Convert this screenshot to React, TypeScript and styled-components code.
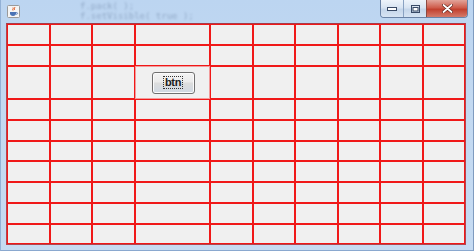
import React from "react";
import styled, { createGlobalStyle } from "styled-components";

const GlobalStyle = createGlobalStyle`
  html, body {
    margin: 0;
    padding: 0;
    width: 474px;
    height: 251px;
    overflow: hidden;
    background: #ffffff;
  }
`;

const COLS = [43, 42, 43, 75, 43, 42, 43, 42, 43, 42];
const ROWS = [21, 21, 33, 21, 21, 20, 21, 21, 21, 20];
const BUTTON_CELL = { col: 3, row: 2 };

const Window = styled.div`
  width: 474px;
  height: 251px;
  box-sizing: border-box;
  display: flex;
  flex-direction: column;
  background: linear-gradient(180deg, #bcd5f1 0%, #c3d9f1 40%, #c6dbf2 100%);
  border-left: 1px solid #93b1d6;
  border-right: 1px solid #7f9bbf;
  border-bottom: 1px solid #8aa8cf;
  font-family: "Liberation Sans", Arial, sans-serif;
`;

const TitleBar = styled.div`
  height: 23px;
  display: flex;
  align-items: flex-start;
  padding-left: 6px;
`;

const AppIcon = styled.div`
  width: 13px;
  height: 13px;
  margin-top: 5px;
  display: flex;
`;

const BlurredCaption = styled.div`
  display: flex;
  flex-direction: column;
  margin-left: 60px;
  margin-top: 1px;
  font-family: "DejaVu Sans Mono", monospace;
  font-size: 9px;
  line-height: 10px;
  color: #6f86a6;
  filter: blur(1.3px);
  opacity: 0.55;
`;

const Spacer = styled.div`
  flex: 1;
`;

const CaptionGroup = styled.div`
  display: flex;
  margin-right: 5px;
  height: 17px;
  border: 1px solid #6a83a6;
  border-top: none;
  border-radius: 0 0 4px 4px;
  overflow: hidden;
`;

const CaptionButton = styled.div<{ $w: number; $close?: boolean }>`
  width: ${(p) => p.$w}px;
  height: 17px;
  display: flex;
  align-items: center;
  justify-content: center;
  border-left: ${(p) => (p.$close ? "1px solid #8d4a42" : "1px solid #8aa2c2")};
  background: ${(p) =>
    p.$close
      ? "linear-gradient(180deg, #e2a49a 0%, #cf5d4c 45%, #c2412f 55%, #d47a6a 100%)"
      : "linear-gradient(180deg, #eef4fb 0%, #d8e4f2 45%, #c5d6ea 55%, #d7e4f3 100%)"};
  &:first-child {
    border-left: none;
  }
`;

const Body = styled.div`
  display: flex;
  flex: 1;
`;

const SideFrame = styled.div<{ $w: number }>`
  width: ${(p) => p.$w}px;
`;

const Content = styled.div`
  border: 1px solid #b3444f;
  border-top-color: #a83a48;
  display: grid;
  grid-template-columns: ${COLS.map((c) => c + "px").join(" ")};
  grid-template-rows: ${ROWS.map((r) => r + "px").join(" ")};
  background: #f0f0f0;
  height: fit-content;
`;

const Cell = styled.div<{ $soft?: boolean }>`
  box-sizing: border-box;
  border: 1px solid ${(p) => (p.$soft ? "#f29a9a" : "#f01818")};
  background: #f0f0f0;
  display: flex;
  align-items: center;
  justify-content: center;
`;

const Button = styled.div`
  box-sizing: border-box;
  width: 43px;
  height: 22px;
  margin-left: 1px;
  border: 1px solid #707070;
  border-radius: 3px;
  background: linear-gradient(180deg, #f4f4f4 0%, #ebebeb 45%, #dddddd 50%, #cfd8e3 100%);
  box-shadow: inset 0 0 0 1px #fbfbfb;
  display: flex;
  align-items: center;
  justify-content: center;
`;

const FocusLabel = styled.span`
  box-sizing: border-box;
  height: 13px;
  padding: 0 1px;
  border: 1px dotted #333333;
  font-family: "Liberation Sans", Arial, sans-serif;
  font-weight: bold;
  font-size: 11px;
  line-height: 11px;
  letter-spacing: -0.4px;
  color: #1a1a1a;
`;

function JavaIcon() {
  return (
    <svg width="13" height="13" viewBox="0 0 13 13">
      <rect x="0.5" y="0.5" width="12" height="12" rx="1" fill="#f5f5f5" stroke="#9a9a9a" />
      <path d="M6 2.5c1 1-1 1.5 0 3M7.5 2c1 1-1 1.6 0 3" stroke="#e0561c" strokeWidth="1" fill="none" />
      <path d="M3 7h6v1.5c0 1.5-1.2 2.5-3 2.5S3 10 3 8.5z" fill="#4a73b5" />
      <path d="M9 7.6h1c.8 0 .8 1.6 0 1.6H9" stroke="#4a73b5" strokeWidth="0.8" fill="none" />
    </svg>
  );
}

function MinimizeGlyph() {
  return (
    <svg width="10" height="4" viewBox="0 0 10 4">
      <rect x="0.5" y="0.5" width="9" height="3" fill="#ffffff" stroke="#384a66" />
    </svg>
  );
}

function MaximizeGlyph() {
  return (
    <svg width="9" height="8" viewBox="0 0 9 8">
      <rect x="0.5" y="0.5" width="8" height="7" fill="none" stroke="#384a66" />
      <rect x="2" y="2.5" width="5" height="3.5" fill="#ffffff" stroke="#384a66" strokeWidth="1" />
    </svg>
  );
}

function CloseGlyph() {
  return (
    <svg width="11" height="9" viewBox="0 0 11 9">
      <path d="M1.5 1l8 7M9.5 1l-8 7" stroke="#5a1c14" strokeWidth="3" strokeLinecap="round" />
      <path d="M1.5 1l8 7M9.5 1l-8 7" stroke="#ffffff" strokeWidth="1.8" strokeLinecap="round" />
    </svg>
  );
}

export default function App() {
  const cells = [];
  for (let r = 0; r < ROWS.length; r++) {
    for (let c = 0; c < COLS.length; c++) {
      const isButton = r === BUTTON_CELL.row && c === BUTTON_CELL.col;
      cells.push(
        <Cell key={`${r}-${c}`} $soft={isButton}>
          {isButton && (
            <Button>
              <FocusLabel>btn</FocusLabel>
            </Button>
          )}
        </Cell>
      );
    }
  }

  return (
    <>
      <GlobalStyle />
      <Window>
        <TitleBar>
          <AppIcon>
            <JavaIcon />
          </AppIcon>
          <BlurredCaption>
            <span>f.pack( );</span>
            <span>f.setVisible( true );</span>
          </BlurredCaption>
          <Spacer />
          <CaptionGroup>
            <CaptionButton $w={22}>
              <MinimizeGlyph />
            </CaptionButton>
            <CaptionButton $w={22}>
              <MaximizeGlyph />
            </CaptionButton>
            <CaptionButton $w={40} $close>
              <CloseGlyph />
            </CaptionButton>
          </CaptionGroup>
        </TitleBar>
        <Body>
          <SideFrame $w={5} />
          <Content>{cells}</Content>
          <SideFrame $w={7} />
        </Body>
      </Window>
    </>
  );
}
